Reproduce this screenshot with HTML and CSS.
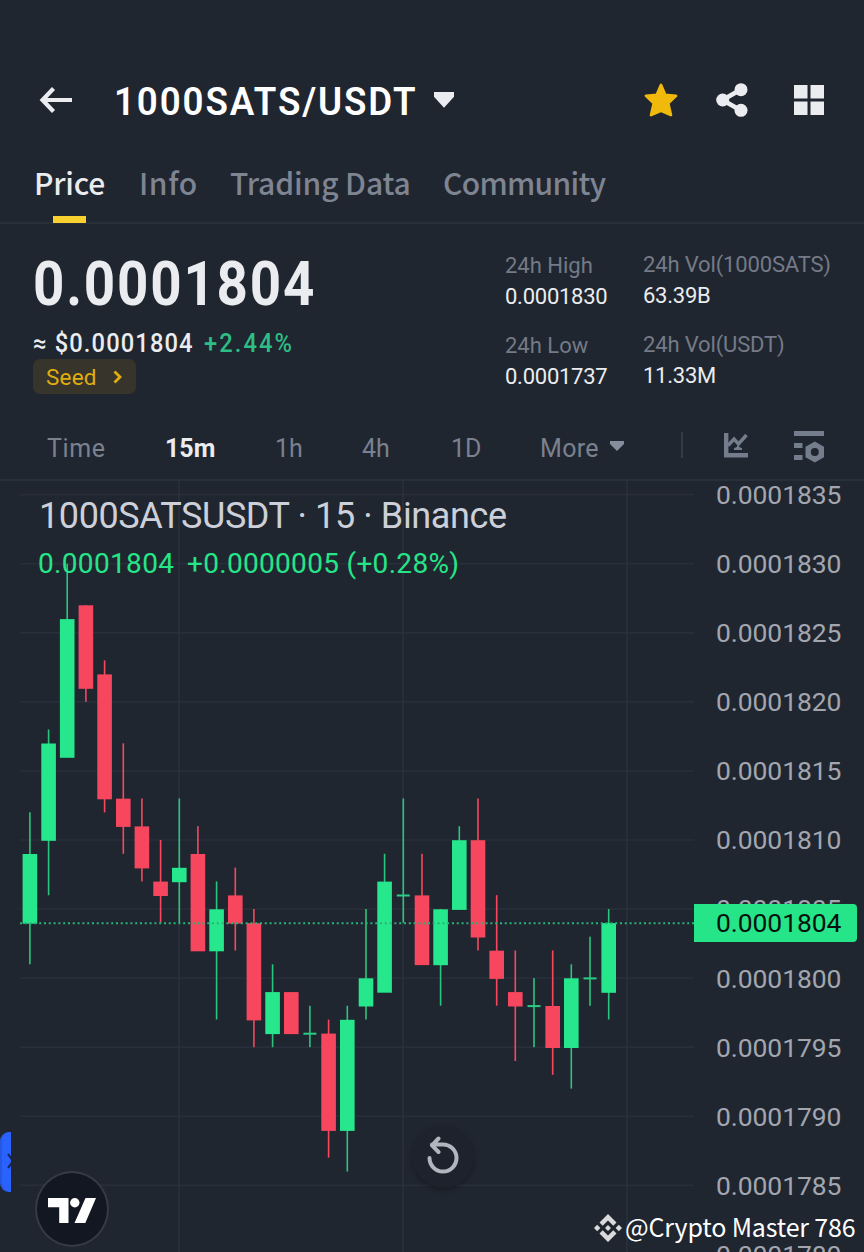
FILE: index.html
```html
<!DOCTYPE html>
<html lang="en">
<head>
<meta charset="utf-8">
<title>1000SATS/USDT</title>
<link rel="stylesheet" href="styles.css">
</head>
<body>
<header class="topbar">
  <svg class="back" width="34" height="28" viewBox="0 0 34 28"><path d="M33 14H4M14.500 2.500L3.500 14l11 11.500" fill="none" stroke="#eaecef" stroke-width="4.200"/></svg>
  <h1 class="pair">1000SATS/USDT</h1>
  <svg class="caret" width="20" height="16" viewBox="0 0 20 16"><path d="M0 0h20v4.800L10 15.700 0 4.800z" fill="#eaecef"/></svg>
  <svg class="star" width="34" height="34" viewBox="0 0 34 34"><path d="M17 2l4.200 9.800 10.800 1-7.800 7.500 2.700 11.700L17 27.700 7.100 32l2.700-11.700L2 12.800l10.800-1z" fill="#f0b90b" stroke="#f0b90b" stroke-width="2.800" stroke-linejoin="round"/></svg>
  <svg class="share" width="32" height="34" viewBox="0 0 32 34"><path d="M25 6.500L6.500 17 25 27.500" fill="none" stroke="#eaecef" stroke-width="4.600"/><g fill="#eaecef"><circle cx="25" cy="6.700" r="6.500"/><circle cx="6.700" cy="17" r="6.500"/><circle cx="25" cy="27.300" r="6.500"/></g></svg>
  <svg class="grid" width="30" height="30" viewBox="0 0 30 30" fill="#eaecef"><path d="M0 0h13.500v13.500H0zM16.500 0H30v13.500H16.500zM0 16.500h13.500V30H0zM16.500 16.500H30V30H16.500z"/></svg>
</header>
<nav class="tabs">
  <a class="tab tab-active">Price</a>
  <a class="tab tab-info">Info</a>
  <a class="tab tab-data">Trading Data</a>
  <a class="tab tab-community">Community</a>
</nav>
<section class="summary">
  <div class="quote">
    <div class="last">0.0001804</div>
    <div class="fiat"><span class="usd">≈ $0.0001804</span><span class="change">+2.44%</span></div>
    <div class="seed"><span>Seed</span><svg width="10" height="14" viewBox="0 0 10 14"><path d="M1.500 1.500L7 7l-5.500 5.500" fill="none" stroke="#e0ad10" stroke-width="2.800"/></svg></div>
  </div>
  <dl class="stats">
    <div><dt>24h High</dt><dd>0.0001830</dd></div>
    <div><dt>24h Low</dt><dd>0.0001737</dd></div>
  </dl>
  <dl class="stats volumes">
    <div><dt>24h Vol(1000SATS)</dt><dd>63.39B</dd></div>
    <div><dt>24h Vol(USDT)</dt><dd>11.33M</dd></div>
  </dl>
</section>
<nav class="intervals">
  <span class="i-time">Time</span>
  <span class="i-15m">15m</span>
  <span class="i-1h">1h</span>
  <span class="i-4h">4h</span>
  <span class="i-1d">1D</span>
  <span class="i-more">More</span>
  <svg class="more-caret" width="14" height="10" viewBox="0 0 14 10"><path d="M0 0h14v3L7 10 0 3z" fill="#848e9c"/></svg>
  <i class="divider"></i>
  <svg class="indicator" width="24" height="25" viewBox="0 0 24 25"><path d="M2.200 0v22.300H24" fill="none" stroke="#747d8c" stroke-width="4.400"/><path d="M4 12.500l6-6.500 4.500 5 8-9" fill="none" stroke="#747d8c" stroke-width="3.400"/><path d="M14 11.500l1.300 2.500 2.700 1.300V17h-8v-1.700l2.700-1.300z" fill="#747d8c"/></svg>
  <svg class="settings" width="30" height="32" viewBox="0 0 30 32"><path d="M0 0h30v5H0zM0 12h8.500v5H0zM0 24h8.500v5H0zM20.800 10.500l9.200 5.300v10.400l-9.200 5.300-9.300-5.300V15.800z" fill="#747d8c"/><circle cx="20.800" cy="21" r="4" fill="#202630"/></svg>
</nav>
<main class="chart">
  <svg id="plot" class="plot" width="864" height="771" viewBox="0 481 864 771"></svg>
  <div class="drawer"><svg width="5" height="16" viewBox="0 0 5 16"><path d="M1 1l5 7-5 7" fill="none" stroke="#172452" stroke-width="2"/></svg></div>
  <div class="brand"><svg width="48" height="25" viewBox="0 0 48 25" fill="#fff"><path d="M0 0h20.500v25h-9.300V9.300H0zM37.500 0H48L37.300 25H26.500z"/><circle cx="26.800" cy="4.700" r="4.700"/></svg></div>
  <div class="reset"><svg width="34" height="40" viewBox="0 0 34 40"><path d="M3.500 22a13.500 13.500 0 1 0 13.500-13.500H6M12.500 2.500L6 9.300l6.500 6.700" fill="none" stroke="#b2b5be" stroke-width="4" stroke-linecap="round" stroke-linejoin="round"/></svg></div>
  <div class="credit"><svg width="28" height="28" viewBox="0 0 28 28" fill="#d9dadc"><path d="M14 0l8.500 8.500-3.200 3.200L14 6.400l-5.300 5.300-3.200-3.200zM14 28l8.500-8.500-3.200-3.200-5.300 5.300-5.300-5.300-3.200 3.200zM14 11l3 3-3 3-3-3zM3.200 10.800L6.400 14l-3.200 3.200L0 14zM24.800 10.800L28 14l-3.200 3.200-3.200-3.200z"/></svg><span>@Crypto Master 786</span></div>
</main>
<script src="chart.js"></script>
</body>
</html>
```
FILE: styles.css
```css
* { box-sizing: border-box; }
body {
  margin: 0;
  width: 864px;
  height: 1252px;
  overflow: hidden;
  background: #202630;
  color: #eaecef;
  font-family: Roboto, "Liberation Sans", sans-serif;
}
svg { display: block; flex: none; }
.topbar {
  height: 140px;
  padding: 60px 40px 0 39px;
  display: flex;
  align-items: center;
}
.pair {
  margin: 3px 0 0 41px;
  width: 302px;
  font-size: 39.500px;
  line-height: 46px;
  font-weight: 600;
  color: #fff;
  letter-spacing: 2px;
  white-space: nowrap;
  transform: scaleX(0.93);
  transform-origin: 0 50%;
}
.caret { margin-left: 18px; }
.star { margin-left: 190px; }
.share { margin-left: 38px; }
.grid { margin-left: 46px; }
.tabs {
  height: 84px;
  border-bottom: 2px solid #292f39;
  padding-left: 34px;
  display: flex;
  align-items: flex-start;
  font-family: "Noto Sans CJK SC", "Noto Sans", sans-serif;
  font-size: 30px;
  line-height: 44px;
  font-weight: 500;
}
.tab { height: 83px; padding-top: 20px; white-space: nowrap; color: #7e8491; }
.tab-active { width: 70px; margin-right: 35px; color: #eaecef; letter-spacing: -0.2px; }
.tab-active::after {
  content: "";
  display: block;
  width: 33px;
  height: 7px;
  margin: 12px auto 0;
  background: #f8d12f;
}
.tab-info { width: 58px; margin-right: 33px; letter-spacing: 0.6px; }
.tab-data { width: 180px; margin-right: 33px; letter-spacing: -0.1px; }
.tab-community { letter-spacing: -0.7px; }
.summary { height: 190px; display: flex; padding-left: 33px; }
.quote { width: 472px; }
.last {
  margin-top: 24px;
  font-size: 61.500px;
  line-height: 72px;
  font-weight: 700;
  letter-spacing: 2px;
  transform: scaleX(0.89);
  transform-origin: 0 50%;
}
.fiat {
  display: flex;
  margin-top: 7px;
  font-size: 25.500px;
  line-height: 32px;
  font-weight: 500;
  letter-spacing: 1.200px;
  transform: scaleX(0.93);
  transform-origin: 0 50%;
}
.usd { width: 184px; flex: none; white-space: nowrap; }
.change { color: #2ebd85; letter-spacing: 2.200px; }
.seed {
  width: 103px;
  height: 35px;
  border-radius: 7px;
  background: #37342c;
  color: #e0ad10;
  display: flex;
  align-items: center;
  padding-left: 13px;
  font-size: 22.500px;
  letter-spacing: 0.2px;
}
.seed span { width: 67px; }
.stats { margin: 27px 0 0; width: 138px; font-size: 22px; line-height: 30px; white-space: nowrap; }
.stats > div { height: 80px; }
.stats dt { color: #747a87; height: 31px; }
.stats dd { margin: 0; color: #eaecef; letter-spacing: -0.25px; }
.volumes { margin-top: 26px; }
.volumes dt { letter-spacing: -0.15px; }
.intervals {
  height: 67px;
  border-bottom: 2px solid #292f39;
  display: flex;
  align-items: center;
  padding: 3px 0 0 47px;
  font-size: 25px;
  color: #7b818e;
  white-space: nowrap;
}
.i-time { width: 118px; letter-spacing: 0.6px; }
.i-15m { width: 110px; font-weight: 700; color: #eaecef; }
.i-1h { width: 87px; }
.i-4h { width: 89px; }
.i-1d { width: 89px; }
.i-more { width: 70px; letter-spacing: 0.3px; }
.more-caret { margin-top: -5px; }
.divider { width: 2px; height: 26px; margin: -6px 0 0 57px; background: #353b46; }
.indicator { margin: -6px 0 0 41px; }
.settings { margin: -3px 0 0 46px; }
.chart { position: relative; height: 771px; overflow: hidden; }
.chart text { font-family: Roboto, sans-serif; }
.axis { font-size: 26.500px; fill: #a3a6af; }
.name { font-size: 36px; fill: #cdd0d9; }
.ohlc { font-size: 28px; fill: #26e589; }
.drawer {
  position: absolute;
  left: 0;
  top: 651px;
  width: 11px;
  height: 60px;
  border-radius: 9px 0 0 9px;
  background: #2962ff;
  border-left: 2px solid #2557df;
  padding: 21px 0 0 5px;
  overflow: hidden;
}
.brand {
  position: absolute;
  left: 35px;
  top: 690px;
  width: 74px;
  height: 76px;
  border-radius: 50%;
  border: 2px solid #363a45;
  background: #131722;
  display: flex;
  align-items: center;
  justify-content: center;
  padding-top: 3px;
}
.reset {
  position: absolute;
  left: 412px;
  top: 645px;
  width: 62px;
  height: 62px;
  border-radius: 50%;
  background: #1e222d;
  box-shadow: 0 2px 5px rgba(0, 0, 0, 0.3);
  display: flex;
  align-items: center;
  justify-content: center;
  padding-bottom: 3px;
}
.credit {
  position: absolute;
  left: 594px;
  top: 729px;
  display: flex;
  align-items: center;
  gap: 3px;
  font-family: "Noto Sans CJK SC", sans-serif;
  font-size: 25px;
  line-height: 38px;
  letter-spacing: -0.15px;
  color: #fff;
  white-space: nowrap;
}
.credit span { margin-top: -3px; }
```
FILE: chart.js
```js
// [up?, high, body top, body bottom, low]
const candles = [
  [1,1812,1809,1804,1801],[1,1818,1817,1810,1806],[1,1830,1826,1816,1816],[0,1827,1827,1821,1820],
  [0,1823,1822,1813,1812],[0,1817,1813,1811,1809],[0,1813,1811,1808,1807],[0,1810,1807,1806,1804],
  [1,1813,1808,1807,1804],[0,1811,1809,1802,1802],[1,1807,1805,1802,1797],[0,1808,1806,1804,1802],
  [0,1805,1804,1797,1795],[1,1801,1799,1796,1795],[0,1799,1799,1796,1796],[1,1798,1796,1796,1795],
  [0,1797,1796,1789,1787],[1,1798,1797,1789,1786],[1,1805,1800,1798,1797],[1,1809,1807,1799,1799],
  [1,1813,1806,1806,1804],[0,1809,1806,1801,1801],[1,1805,1805,1801,1798],[1,1811,1810,1805,1805],
  [0,1813,1810,1803,1802],[0,1806,1802,1800,1798],[0,1802,1799,1798,1794],[1,1800,1798,1798,1795],
  [0,1802,1798,1795,1793],[1,1801,1800,1795,1792],[1,1803,1800,1800,1798],[1,1805,1804,1799,1797]
];
const y = p => 494.6 + (1835 - p) * 13.815;
const rect = (x, top, w, h, fill) =>
  `<rect x="${x.toFixed(1)}" y="${top.toFixed(1)}" width="${w}" height="${h.toFixed(1)}" fill="${fill}"/>`;
const label = (x, base, len, cls, str, extra = "") =>
  `<text x="${x}" y="${base.toFixed(1)}" textLength="${len}" class="${cls}" ${extra}>${str}</text>`;
let out = "";
for (let p = 1835; p >= 1785; p -= 5) out += rect(20, y(p) - 0.8, 674, 1.6, "#292f3a");
for (const x of [179, 403, 627]) out += rect(x - 0.8, 480, 1.6, 772, "#2b313c");
candles.forEach(([up, hi, top, bot, lo], i) => {
  const x = 29.9 + i * 18.67;
  const c = up ? "#26e78b" : "#f7475e";
  out += rect(x - 0.8, y(hi), 1.6, y(lo) - y(hi), up ? "#2bc47d" : c);
  out += top === bot ? rect(x - 6.5, y(top) - 0.7, 13, 2, "#29ce82")
                     : rect(x - 7.3, y(top) + 0.2, 14.6, y(bot) - y(top) + 0.6, c);
});
out += label(39, 527.8, 468, "name", "1000SATSUSDT · 15 · Binance");
out += label(38, 572.6, 136, "ohlc", "0.0001804");
out += label(187, 572.6, 272, "ohlc", "+0.0000005 (+0.28%)");
out += `<path d="M20 ${y(1804) + 0.3}H694" stroke="#26b477" stroke-width="2" stroke-dasharray="2 2.8"/>`;
for (let p = 1835; p >= 1780; p -= 5) out += label(716, y(p) + 9.4, 125.5, "axis", "0.000" + p);
out += `<path d="M694 904h159a4 4 0 0 1 4 4v30a4 4 0 0 1-4 4H694z" fill="#26e589"/>`;
out += label(716, 932.3, 125.5, "axis", "0.0001804", 'style="fill:#07120d"');
document.getElementById("plot").innerHTML = out;
```
